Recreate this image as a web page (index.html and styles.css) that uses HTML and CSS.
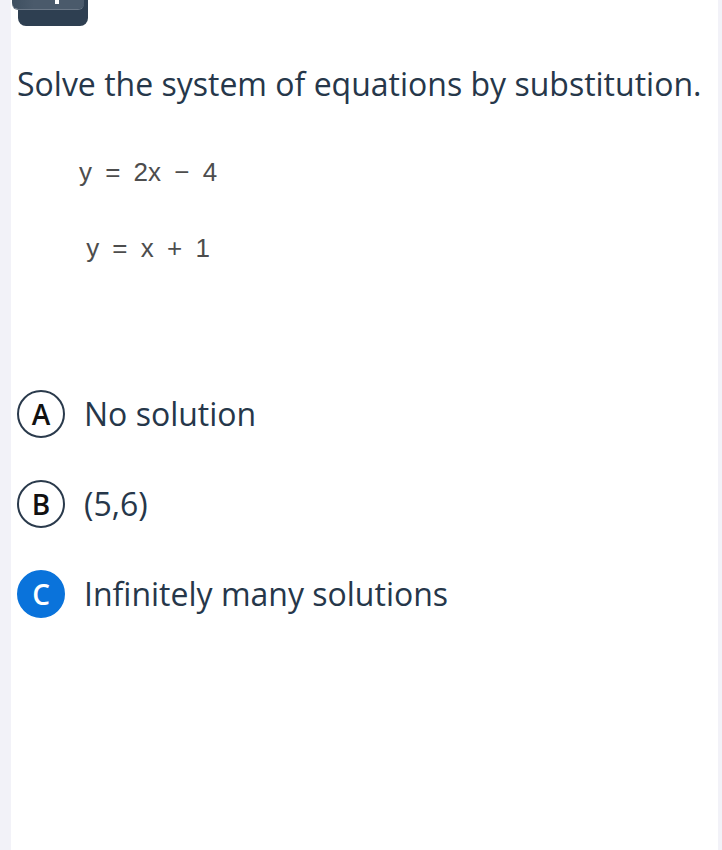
FILE: index.html
```html
<!DOCTYPE html>
<html>
<head>
<meta charset="utf-8">
<link rel="stylesheet" href="styles.css">
</head>
<body>
<div class="page">
  <div class="rail-left"></div>
  <main class="content">
    <div class="top-btn">
      <div class="top-btn-face"><span class="top-btn-mark"></span></div>
    </div>
    <h1 class="question">Solve the system of equations by substitution.</h1>
    <div class="equations">
      <div class="eq">y = 2x − 4</div>
      <div class="eq">y = x + 1</div>
    </div>
    <ul class="options">
      <li class="option"><span class="letter">A</span><span class="label">No solution</span></li>
      <li class="option"><span class="letter">B</span><span class="label">(5,6)</span></li>
      <li class="option selected"><span class="letter">C</span><span class="label">Infinitely many solutions</span></li>
    </ul>
  </main>
  <div class="rail-right"></div>
</div>
</body>
</html>
```

FILE: styles.css
```css
html, body {
  margin: 0;
  padding: 0;
  background: #ffffff;
}
.page {
  display: flex;
  width: 722px;
  height: 850px;
  overflow: hidden;
}
.rail-left {
  width: 11px;
  flex: none;
  background: #f2f2f8;
}
.rail-right {
  width: 4px;
  flex: none;
  background: #f2f2f8;
}
.content {
  flex: 1;
  padding: 0 0 0 6px;
  font-family: "Open Sans", "Liberation Sans", sans-serif;
  color: #26374a;
}
.top-btn {
  position: relative;
  margin-left: 1px;
  width: 70px;
  height: 26px;
  background: #2e3f51;
  border-radius: 0 0 8px 8px;
}
.top-btn-face {
  position: absolute;
  left: -6px;
  top: -6px;
  width: 72px;
  height: 15px;
  background: linear-gradient(90deg, #3e4f60 0%, #4a5a6b 30%, #4a5a6b 100%);
  border-radius: 0 0 6px 6px;
  box-shadow: 0 1px 0 #6b7887;
}
.top-btn-mark {
  position: absolute;
  left: 43px;
  top: 0;
  width: 4px;
  height: 10px;
  background: #ffffff;
}
.question {
  margin: 38px 0 0 0;
  font-size: 32px;
  line-height: 40px;
  font-weight: 400;
  letter-spacing: 0;
}
.equations {
  margin: 48px 0 0 0;
  width: 262px;
  display: flex;
  flex-direction: column;
  align-items: center;
  gap: 36px;
  font-family: "Liberation Sans", Arial, sans-serif;
  font-size: 26px;
  line-height: 40px;
  color: #4d4d4d;
  word-spacing: 6px;
}
.options {
  list-style: none;
  margin: 122px 0 0 0;
  padding: 0;
  display: flex;
  flex-direction: column;
  gap: 42px;
}
.option {
  display: flex;
  align-items: center;
  gap: 19px;
  height: 48px;
}
.letter {
  box-sizing: border-box;
  width: 48px;
  height: 48px;
  flex: none;
  border: 2px solid #2a3a4c;
  border-radius: 50%;
  display: flex;
  align-items: center;
  justify-content: center;
  font-size: 28px;
  line-height: 1;
  font-weight: 600;
  color: #111111;
}
.selected .letter {
  background: #0a73db;
  border-color: #0a73db;
  color: #ffffff;
}
.label {
  font-size: 32px;
  line-height: 40px;
}
```
